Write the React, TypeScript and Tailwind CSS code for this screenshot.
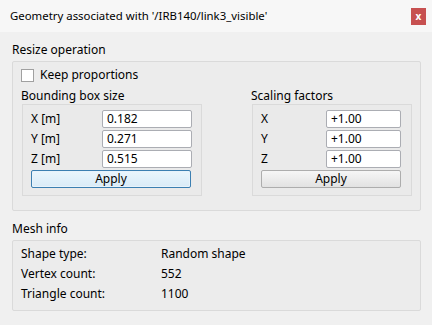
import React from "react";

const font = { fontFamily: '"Noto Sans", "Segoe UI", sans-serif' };

function Field({ value, w }: { value: string; w: string }) {
  return (
    <div
      className={`${w} h-[18px] bg-white border border-[#abadb3] rounded-[2px] pl-[4px] flex items-center text-[12px] leading-[16px] text-black`}
    >
      {value}
    </div>
  );
}

export default function App() {
  return (
    <div
      className="w-[432px] h-[325px] bg-[#f0f0f0] flex flex-col text-[12px] leading-[16px] text-black overflow-hidden"
      style={font}
    >
      {/* title bar */}
      <div className="h-[32px] bg-[#f7f7f7] flex items-center pl-[10px] pr-[5px] shrink-0">
        <span className="flex-1 text-[11.4px]">Geometry associated with '/IRB140/link3_visible'</span>
        <div className="w-[15px] h-[17px] bg-[#c75050] flex items-center justify-center text-white text-[10px] font-bold leading-none mr-[1px]">
          x
        </div>
      </div>

      <div className="pl-[12px] pr-[11px] pt-[10px] flex flex-col">
        <div className="h-[16px]">Resize operation</div>
        <div className="mt-[3px] border border-[#dadada] bg-[#ececec] pl-[8px] pr-[7px] pt-[5px] pb-[14px] rounded-[2px]">
          <div className="h-[16px] flex items-center">
            <div className="w-[13px] h-[13px] bg-white border border-[#a0a0a0]" />
            <span className="ml-[6px]">Keep proportions</span>
          </div>
          <div className="mt-[5px] flex">
            {/* left column */}
            <div className="w-[181px] flex flex-col">
              <div className="h-[16px]">Bounding box size</div>
              <div className="ml-[1px] border border-[#dadada] bg-[#eaeaea] pl-[8px] pr-[9px] pt-[5px] pb-[7px] flex flex-col gap-[2px]">
                {[
                  ["X [m]", "0.182"],
                  ["Y [m]", "0.271"],
                  ["Z [m]", "0.515"],
                ].map(([l, v]) => (
                  <div key={l} className="flex items-center h-[18px]">
                    <span className="w-[71px]">{l}</span>
                    <Field value={v} w="w-[90px]" />
                  </div>
                ))}
                <div className="w-[160px] h-[18px] border border-[#3c7fb1] rounded-[2px] bg-gradient-to-b from-[#eaf6fd] to-[#d9ebf7] flex items-center justify-center shadow-[inset_0_0_0_1px_#e8f3fb]">
                  Apply
                </div>
              </div>
            </div>
            <div className="w-[49px]" />
            {/* right column */}
            <div className="w-[161px] flex flex-col">
              <div className="h-[16px]">Scaling factors</div>
              <div className="ml-[1px] border border-[#dadada] bg-[#eaeaea] pl-[8px] pr-[10px] pt-[5px] pb-[7px] flex flex-col gap-[2px]">
                {[
                  ["X", "+1.00"],
                  ["Y", "+1.00"],
                  ["Z", "+1.00"],
                ].map(([l, v]) => (
                  <div key={l} className="flex items-center h-[18px]">
                    <span className="w-[65px]">{l}</span>
                    <Field value={v} w="w-[75px]" />
                  </div>
                ))}
                <div className="w-[140px] h-[18px] border border-[#adadad] rounded-[2px] bg-gradient-to-b from-[#f6f6f6] to-[#e2e2e2] flex items-center justify-center">
                  Apply
                </div>
              </div>
            </div>
          </div>
        </div>

        <div className="mt-[10px] h-[16px]">Mesh info</div>
        <div className="mt-[3px] border border-[#dadada] bg-[#ececec] pl-[8px] pt-[3px] pb-[6px] rounded-[2px] leading-[20px]">
          {[
            ["Shape type:", "Random shape"],
            ["Vertex count:", "552"],
            ["Triangle count:", "1100"],
          ].map(([l, v]) => (
            <div key={l} className="flex h-[20px] items-center">
              <span className="w-[140px]">{l}</span>
              <span>{v}</span>
            </div>
          ))}
        </div>
      </div>
    </div>
  );
}
